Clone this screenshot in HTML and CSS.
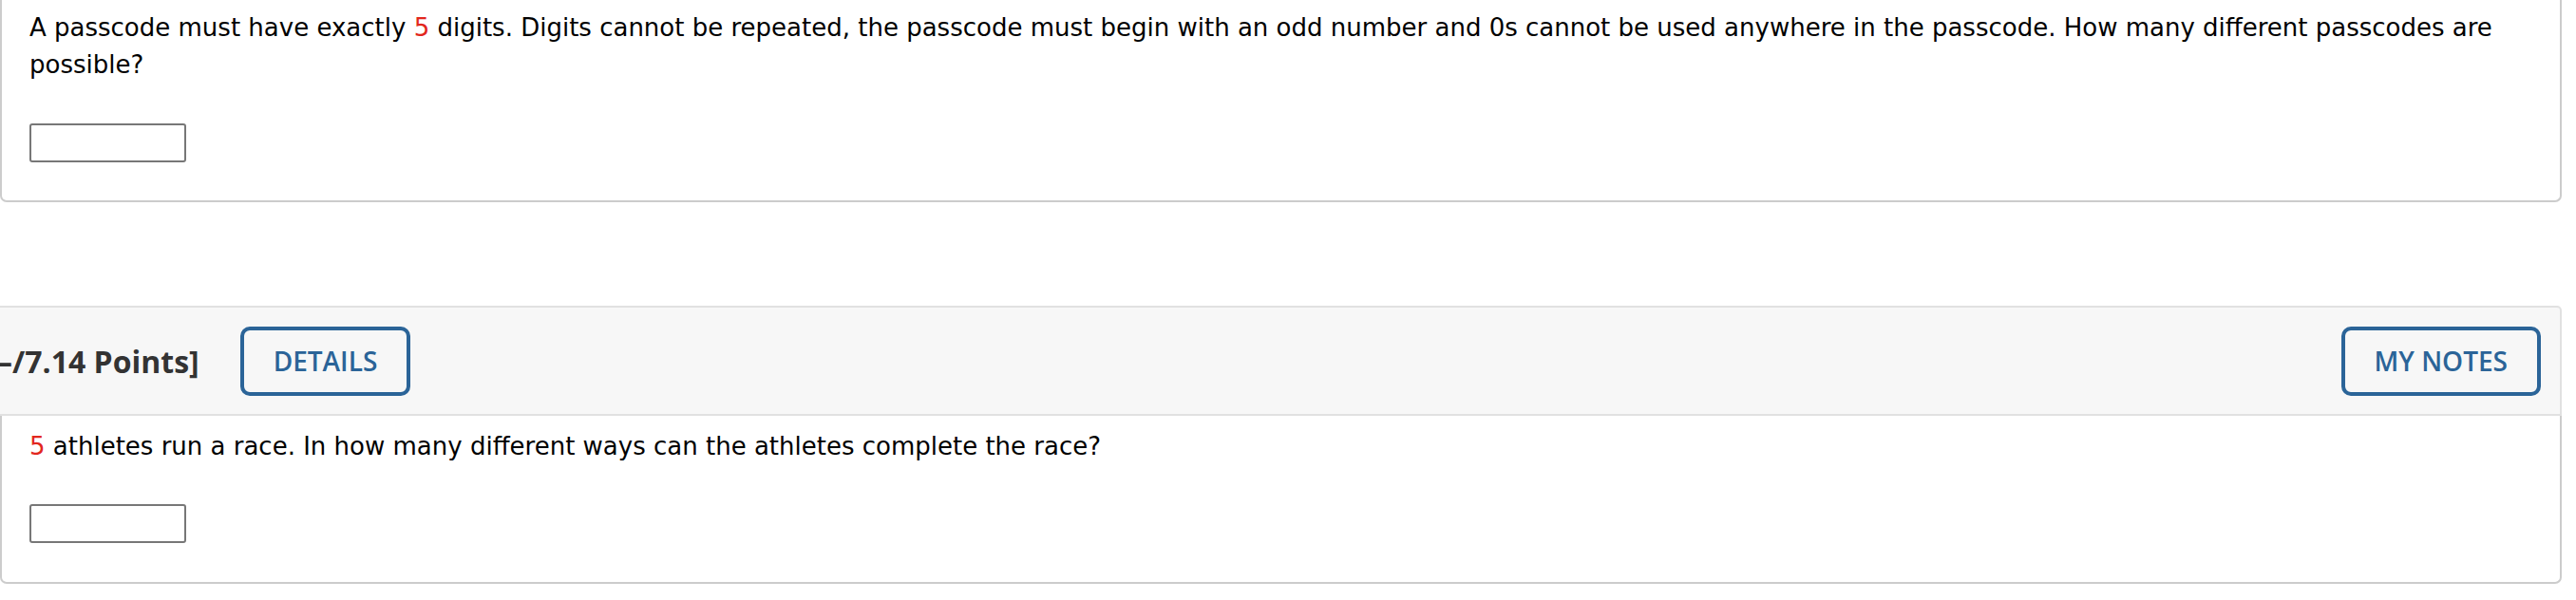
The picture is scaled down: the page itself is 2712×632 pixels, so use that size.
FILE: index.html
```html
<!DOCTYPE html>
<html lang="en">
<head>
    <meta charset="UTF-8">
    <meta name="viewport" content="width=device-width, initial-scale=1.0">
    <title>Assignment</title>
    <link rel="stylesheet" href="styles.css">
</head>
<body>

    <div class="assignment">
        <div class="question-body first">
            <p class="question-text">A passcode must have exactly <span class="red">5</span> digits. Digits cannot be repeated, the passcode must begin with an odd number and 0s cannot be used anywhere in the passcode. How many different passcodes are possible?</p>
            <input type="text" class="answer">
        </div>

        <div class="question-wrap">
            <div class="question-header">
                <span class="points">&ndash;/7.14 Points]</span>
                <button type="button" class="header-button">DETAILS</button>
                <button type="button" class="header-button notes">MY NOTES</button>
            </div>
            <div class="question-body">
                <p class="question-text"><span class="red">5</span> athletes run a race. In how many different ways can the athletes complete the race?</p>
                <input type="text" class="answer">
            </div>
        </div>
    </div>

</body>
</html>
```

FILE: styles.css
```css
* {
    box-sizing: border-box;
}
body {
    margin: 0;
    font-family: "DejaVu Sans", Verdana, sans-serif;
    font-size: 26px;
    color: #000;
    background-color: #fff;
    overflow: hidden;
}
.assignment {
    width: 2697px;
}
.question-body {
    background-color: #fff;
    border: 2px solid #ccc;
    border-top: none;
    border-radius: 0 0 7px 7px;
    padding: 13px 40px 41px 29px;
}
.question-body.first {
    padding-top: 10px;
    padding-bottom: 40px;
}
.question-text {
    margin: 0;
    line-height: 39px;
}
.red {
    color: #e2271d;
}
.answer {
    display: block;
    width: 165px;
    height: 41px;
    margin-top: 41px;
    border: 2px solid #777;
    border-radius: 3px;
    background-color: #fff;
}
.question-body.first .answer {
    margin-top: 42px;
}
.question-wrap {
    margin-top: 109px;
}
.question-header {
    display: flex;
    align-items: center;
    height: 116px;
    margin-left: -40px;
    padding: 0 20px 0 35px;
    background-color: #f7f7f7;
    border: 2px solid #e1e1e1;
    border-radius: 0 5px 0 0;
    font-family: "Open Sans", sans-serif;
}
.points {
    font-size: 32px;
    font-weight: 700;
    color: #333;
    margin-right: 43px;
}
.header-button {
    height: 73px;
    padding: 0 31px;
    background-color: transparent;
    border: 4px solid #2b6498;
    border-radius: 10px;
    font-family: "Open Sans", sans-serif;
    font-size: 28px;
    font-weight: 600;
    color: #2b6498;
}
.header-button.notes {
    margin-left: auto;
}
```
